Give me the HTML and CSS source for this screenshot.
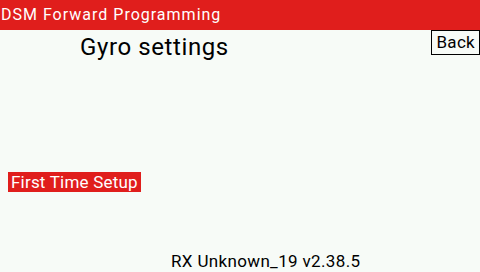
FILE: index.html
```html
<!DOCTYPE html>
<html>
<head>
<meta charset="utf-8">
<link rel="stylesheet" href="styles.css">
</head>
<body>
<div class="screen">
  <div class="header">DSM Forward Programming</div>
  <div class="titlerow">
    <div class="title">Gyro settings</div>
    <div class="back">Back</div>
  </div>
  <div class="content">
    <div class="item">First Time Setup</div>
  </div>
  <div class="footer">RX Unknown_19 v2.38.5</div>
</div>
</body>
</html>
```
FILE: styles.css
```css
html, body {
  margin: 0;
  padding: 0;
}
body {
  width: 480px;
  height: 272px;
  overflow: hidden;
  background: #f7fbf7;
  font-family: Roboto, "Liberation Sans", sans-serif;
}
.screen {
  width: 480px;
  height: 272px;
  display: flex;
  flex-direction: column;
}
.header {
  height: 30px;
  background: #e01e1c;
  color: #fff;
  font-size: 16px;
  line-height: 29px;
  padding-left: 1px;
  letter-spacing: 1px;
  box-sizing: border-box;
}
.titlerow {
  display: flex;
  justify-content: space-between;
  align-items: flex-start;
  height: 40px;
}
.title {
  margin-left: 80px;
  font-size: 24px;
  line-height: 34px;
  letter-spacing: 0.6px;
  color: #000;
}
.back {
  border: 1px solid #000;
  font-size: 17px;
  line-height: 23px;
  padding: 0 4px;
  letter-spacing: 0.3px;
  color: #000;
}
.content {
  flex: 1;
  padding-top: 102px;
  padding-left: 8px;
}
.item {
  display: inline-block;
  background: #e01e1c;
  color: #fff;
  font-size: 17px;
  line-height: 20px;
  padding: 0 3px;
  letter-spacing: 0.2px;
}
.footer {
  height: 26px;
  box-sizing: border-box;
  padding-top: 4px;
  padding-left: 171px;
  font-size: 17px;
  line-height: 22px;
  letter-spacing: 0.35px;
  color: #000;
}
```
